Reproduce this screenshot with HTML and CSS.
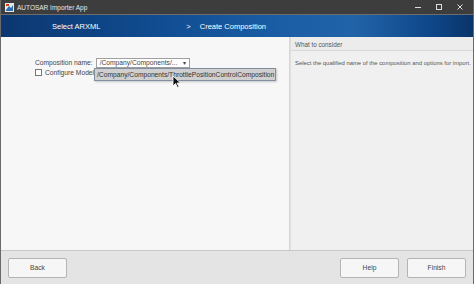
FILE: index.html
```html
<!DOCTYPE html>
<html>
<head>
<meta charset="utf-8">
<link rel="stylesheet" href="styles.css">
</head>
<body>
<div class="window">
  <div class="titlebar">
    <svg class="appicon" width="9" height="9" viewBox="0 0 9 9"><rect x="0" y="0" width="9" height="9" fill="#e8e8e8"/><path d="M1 7 L4 3 L6 5 L8 2 L8 8 L1 8 Z" fill="#2a6fb5"/><path d="M1 1 h3 v2 h-3z" fill="#d04020"/></svg>
    <span class="title">AUTOSAR Importer App</span>
    <div class="controls">
      <svg width="10" height="10" viewBox="0 0 10 10"><line x1="2" y1="5.5" x2="8" y2="5.5" stroke="#ddd" stroke-width="1"/></svg>
      <svg width="10" height="10" viewBox="0 0 10 10"><rect x="2.5" y="2.5" width="5" height="5" fill="none" stroke="#ddd" stroke-width="1"/></svg>
      <svg width="10" height="10" viewBox="0 0 10 10"><path d="M2.5 2.5 L7.5 7.5 M7.5 2.5 L2.5 7.5" stroke="#ddd" stroke-width="1"/></svg>
    </div>
  </div>
  <div class="banner">
    <span class="step step1">Select ARXML</span>
    <span class="step step2"><span class="arrow">&gt;</span>Create Composition</span>
  </div>
  <div class="body">
    <div class="main">
      <div class="row">
        <span class="label">Composition name:</span>
        <div class="select"><span>/Company/Components/...</span><span class="caret">&#9662;</span></div>
      </div>
      <div class="row row2">
        <span class="checkbox"></span><span class="label">Configure Models</span>
      </div>
      <div class="popup">/Company/Components/ThrottlePositionControlComposition</div>
      <svg class="cursor" width="10" height="14" viewBox="0 0 10 14"><path d="M1 1 L1 11 L3.5 8.5 L5.5 12.5 L7 11.8 L5 8 L8.5 8 Z" fill="#111" stroke="#fff" stroke-width="0.8"/></svg>
    </div>
    <div class="side">
      <div class="side-head">What to consider</div>
      <div class="side-text">Select the qualified name of the composition and options for import.</div>
    </div>
  </div>
  <div class="footer">
    <button class="btn">Back</button>
    <div class="spacer"></div>
    <button class="btn">Help</button>
    <button class="btn">Finish</button>
  </div>
</div>
</body>
</html>
```
FILE: styles.css
```css
* { box-sizing: border-box; }
html, body { margin: 0; padding: 0; }
body { width: 474px; height: 284px; overflow: hidden; font-family: "Liberation Sans", Arial, sans-serif; background: #e6e6e6; }
.window { width: 474px; height: 284px; display: flex; flex-direction: column; border-left: 1px solid #6a6a6a; border-right: 1px solid #6a6a6a; }
.titlebar { height: 15px; background: #3d3d3d; display: flex; align-items: center; padding-left: 4px; color: #e8e8e8; font-size: 6.5px; border-bottom: 1px solid #6d6d6d; }
.appicon { margin-right: 3px; }
.controls { margin-left: auto; display: flex; gap: 11px; padding-right: 8px; }
.banner { height: 22px; background: linear-gradient(90deg, #0c3770 0%, #0f4a8e 30%, #1b5ea6 60%, #2163a8 75%, #0d4587 92%, #0a3468 100%); display: flex; align-items: center; color: #fff; font-size: 7.5px; }
.step1 { margin-left: 51px; }
.step2 { margin-left: 86px; }
.arrow { margin-right: 9px; }
.body { flex: 1; display: flex; }
.main { width: 289px; background: #f7f7f7; position: relative; padding-top: 20px; padding-left: 34px; border-right: 1px solid #d6d6d6; }
.row { display: flex; align-items: center; font-size: 6.7px; color: #444; height: 11px; }
.row .label { margin-right: 3px; }
.select { width: 94px; height: 10px; border: 1px solid #a0a0a0; background: #fff; display: flex; align-items: center; padding-left: 3px; font-size: 6.7px; color: #444; }
.caret { margin-left: auto; margin-right: 3px; font-size: 6px; }
.row2 { height: 9px; }
.checkbox { width: 7px; height: 7px; border: 1px solid #777; background: #fff; margin-right: 3px; }
.popup { position: absolute; left: 93px; top: 31px; width: 182px; height: 13px; background: #cfcfcf; border: 1px solid #7f8ea0; font-size: 6.7px; color: #333; padding-left: 2px; line-height: 11px; box-shadow: 1px 1px 2px rgba(0,0,0,0.2); }
.cursor { position: absolute; left: 171px; top: 38px; }
.side { flex: 1; background: #f0f0f0; border-left: 1px solid #e0e0e0; }
.side-head { height: 14px; font-size: 6.3px; color: #555; padding-left: 4px; padding-top: 4px; border-bottom: 1px solid #d8d8d8; background: #ececec; }
.side-text { font-size: 5.9px; color: #555; padding-left: 4px; padding-top: 9px; white-space: nowrap; }
.footer { height: 34px; background: #e4e4e4; border-top: 1px solid #c8c8c8; display: flex; align-items: center; padding: 0 7px; gap: 8px; }
.spacer { flex: 1; }
.btn { width: 59px; height: 20px; background: #f6f6f6; border: 1px solid #b4b4b4; border-radius: 2px; font-family: "Liberation Sans", Arial, sans-serif; font-size: 6.7px; color: #444; padding: 0; }
```
